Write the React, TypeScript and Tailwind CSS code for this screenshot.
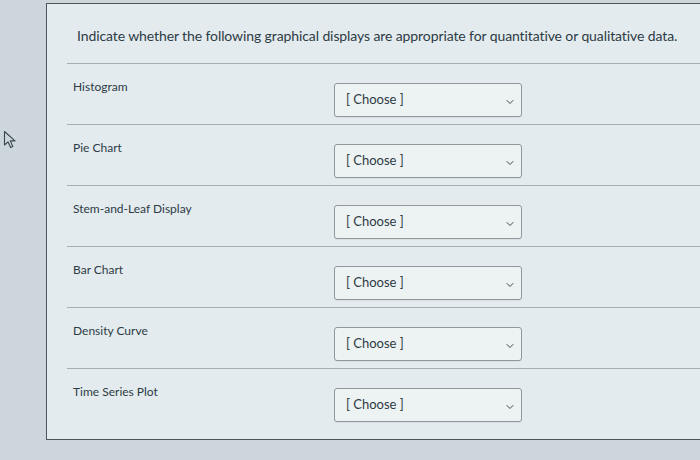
import { ChevronDown } from "lucide-react";

const rows = [
  "Histogram",
  "Pie Chart",
  "Stem-and-Leaf Display",
  "Bar Chart",
  "Density Curve",
  "Time Series Plot",
];

function Cursor() {
  return (
    <svg width="16" height="20" viewBox="0 0 16 20" className="text-[#3a464d]">
      <path
        d="M1.5 1.5 L1.5 15 L5 11.8 L7.6 17.5 L9.8 16.5 L7.3 10.9 L12 10.9 Z"
        fill="none"
        stroke="currentColor"
        strokeWidth="1.1"
        strokeLinejoin="round"
      />
    </svg>
  );
}

function Select() {
  return (
    <div className="flex h-[34px] w-[188px] items-center justify-between rounded-[3px] border border-[#8e989d] bg-[#edf2f3] pl-[11px] pr-[5px] shadow-[0_1px_0_rgba(0,0,0,0.05)]">
      <span className="text-[13px] text-[#2d3b45]">[ Choose ]</span>
      <ChevronDown size={12} strokeWidth={2} className="mt-[3px] text-[#3d4a51]" />
    </div>
  );
}

export default function App() {
  return (
    <div
      className="flex h-[460px] w-[700px] overflow-hidden bg-[#cdd6da]"
      style={{ fontFamily: "Lato, 'Open Sans', sans-serif" }}
    >
      <div className="w-[46px] shrink-0 pl-[3px] pt-[130px]">
        <Cursor />
      </div>

      <div className="mt-[3px] h-[437px] flex-1 border-b border-l border-t border-[#4b565c] bg-[#e3ebee] pl-[20px]">
        <p className="pl-[10px] pt-[21px] text-[14px] tracking-[-0.1px] text-[#2d3b45]">
          Indicate whether the following graphical displays are appropriate for quantitative or qualitative data.
        </p>

        <div className="mt-[17px]">
          {rows.map((label) => (
            <div key={label} className="flex h-[61px] border-t border-[#a4afb4] pl-[6px]">
              <div className="w-[261px] pt-[14px] text-[12px] text-[#2d3b45]">{label}</div>
              <div className="pt-[19px]">
                <Select />
              </div>
            </div>
          ))}
        </div>
      </div>
    </div>
  );
}
